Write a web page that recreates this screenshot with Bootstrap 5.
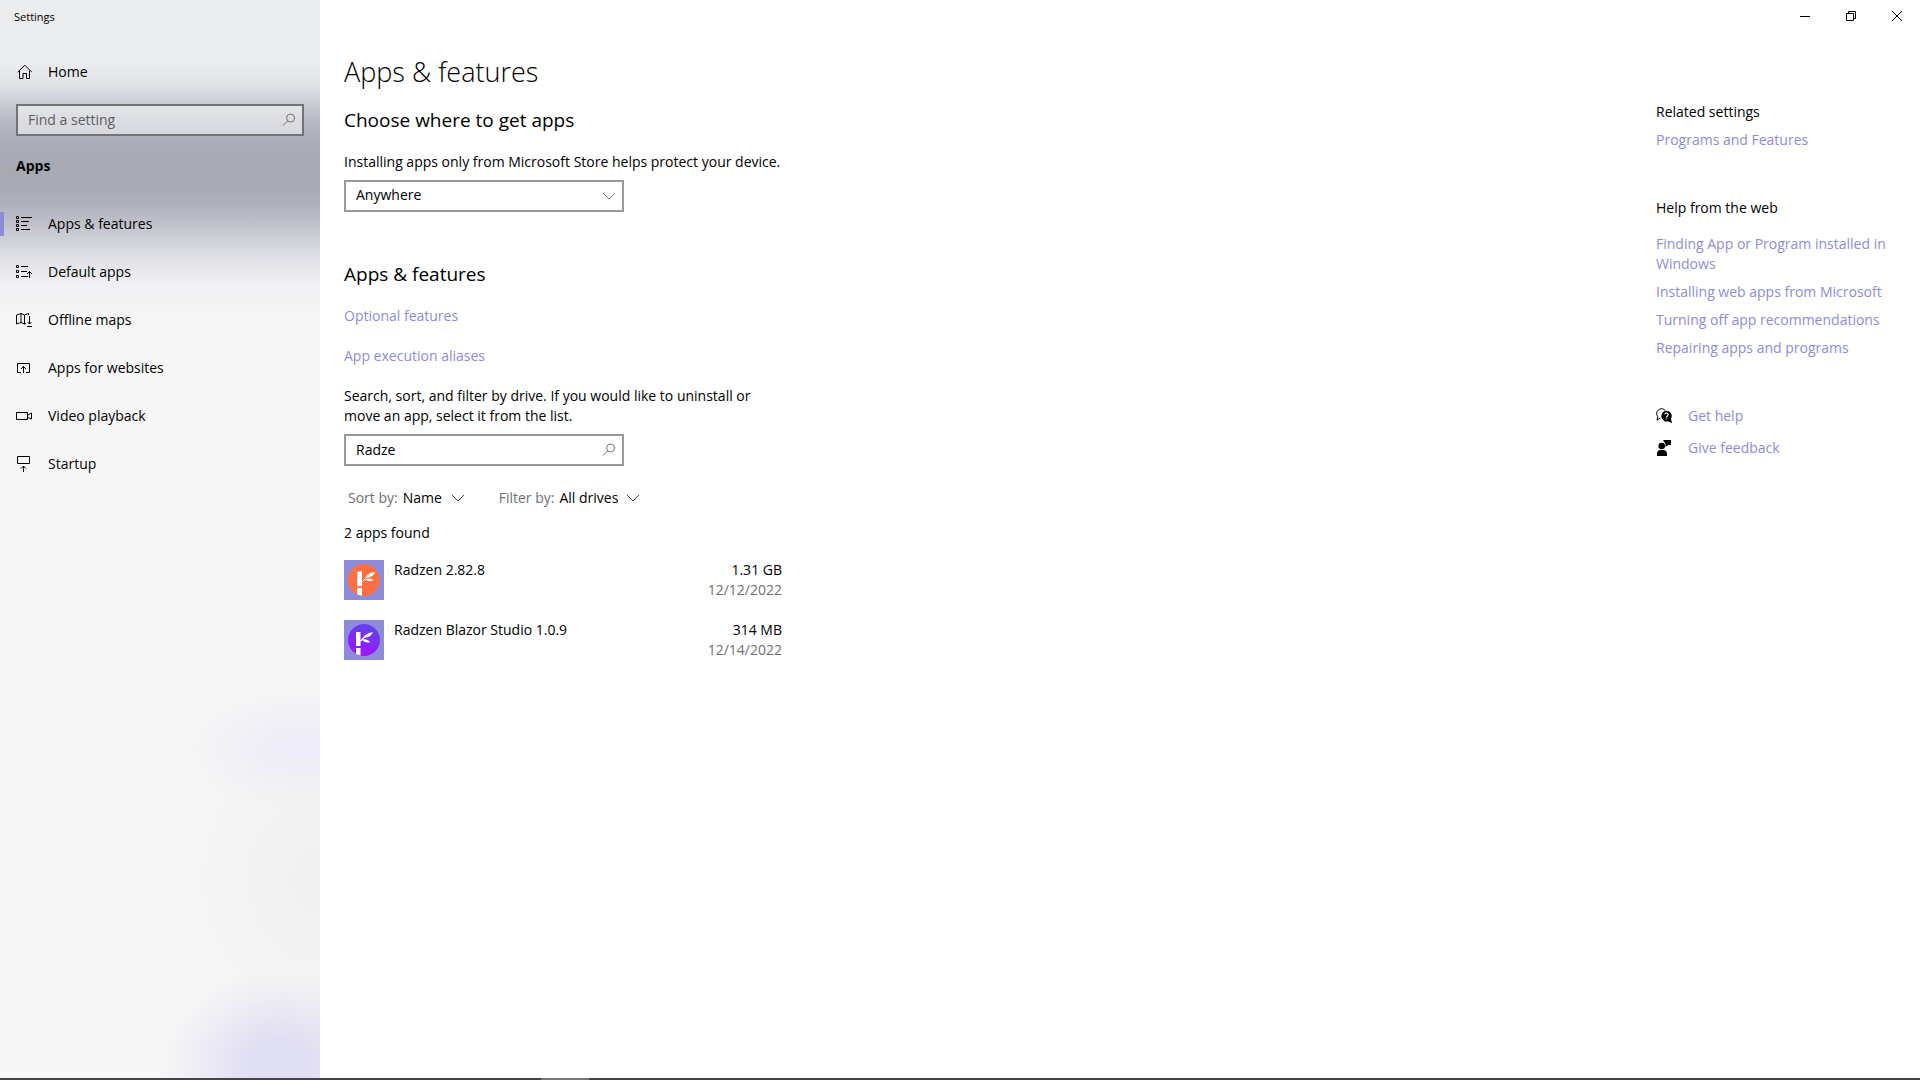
<!DOCTYPE html>
<html lang="en">
<head>
<meta charset="utf-8">
<meta name="viewport" content="width=device-width, initial-scale=1">
<title>Settings</title>
<link href="https://cdn.jsdelivr.net/npm/bootstrap@5.3.0/dist/css/bootstrap.min.css" rel="stylesheet">
<style>
  :root { --accent: #8f8bdb; --line: #999; --muted: #707070; }
  body { font-family: "Open Sans", "Noto Sans", sans-serif; font-size: 14px; line-height: 20px; color: #000; background: #fff; }
  a { color: var(--accent); text-decoration: none; }
  a:hover { color: #6b6b6b; }
  svg { display: block; flex: none; }
  .line-icon { fill: none; stroke: currentColor; stroke-width: 1; }

  .side-pane {
    width: 320px;
    background:
      radial-gradient(ellipse 120px 96px at 280px 1066px, rgba(214,212,241,.7) 25%, rgba(225,224,245,0) 100%),
      radial-gradient(ellipse 120px 60px at 300px 748px, rgba(234,233,248,.7) 20%, rgba(240,240,250,0) 100%),
      radial-gradient(ellipse 150px 170px at 320px 880px, rgba(241,240,239,.8) 20%, rgba(244,244,244,0) 100%),
      linear-gradient(#ebeced 0, #ecedee 60px, #e3e4e8 82px, #d2d4db 98px, #babcc6 118px, #abadb7 140px, #a7aab3 165px, #a8abb4 188px, #b0b2bb 206px, #c2c3cc 226px, #d4d4dd 244px, #e3e3e9 262px, #f0f0f3 284px, #f6f6f6 315px, #f7f7f7 100%);
  }
  .app-title { font-size: 11px; height: 32px; padding: 1px 14px 0; }
  .side-link { height: 48px; padding-left: 16px; gap: 16px; color: #000; }
  .side-link:hover { background: rgba(0,0,0,.08); color: #000; }
  .side-link.home { height: 32px; }
  .side-link.active::before { content: ""; width: 4px; height: 24px; margin: 0 -4px 0 -16px; background: var(--accent); }
  .side-pane h2 { font-size: 14px; line-height: 20px; font-weight: 700; }

  .box { height: 32px; border: 2px solid var(--line); border-radius: 0; padding: 0 32px 2px 10px; font-size: 14px; line-height: 20px; color: #000; background: #fff; }
  .box:focus { border-color: var(--accent); box-shadow: none; }
  .pane-box, .pane-box:focus { border-color: #727379; background: rgba(255,255,255,.5); }
  .pane-box::placeholder { color: #5d5e62; }
  .box-icon { position: absolute; right: 8px; top: 9px; color: #757575; pointer-events: none; }
  .field { width: 280px; }

  .win-btn { width: 46px; height: 32px; border: 0; background: transparent; padding: 0; display: grid; place-items: center; }
  .win-btn:hover { background: #e5e5e5; }
  .page-body { padding: 16px 24px 32px; }
  h1 { font-size: 27px; line-height: 48px; font-weight: 300; }
  main h2 { font-size: 19px; line-height: 32px; font-weight: 400; }
  .next-section { margin-top: 46px; }
  .content-col { width: 100%; max-width: 450px; }
  .wrap-text { max-width: 424px; }
  .sort-bar { gap: 34px; }
  .plain-select { appearance: none; border: 0; background: transparent; padding: 0 22px 0 5px; color: #000; height: 32px; }
  .plain-icon { position: absolute; right: 0; top: 9px; pointer-events: none; color: #444; }
  .muted { color: var(--muted); }
  .found { line-height: 22px; }
  .app-row { max-width: 438px; height: 60px; gap: 10px; }
  .side-links { width: 264px; padding-top: 70px; }
  .side-links h3 { font-size: 14px; line-height: 20px; font-weight: 400; }
  .task-edge { height: 2px; background: #444448; padding-left: 541px; }
  .task-edge span { display: block; width: 48px; height: 2px; background: #77777a; }
</style>
<script src="https://cdn.jsdelivr.net/npm/bootstrap@5.3.0/dist/js/bootstrap.bundle.min.js"></script>
</head>
<body>
<div class="d-flex flex-column min-vh-100">
  <div class="d-flex flex-grow-1">

    <aside class="side-pane flex-shrink-0">
      <div class="app-title d-flex align-items-center">Settings</div>
      <a href="#" class="side-link home d-flex align-items-center mt-4">
        <svg class="line-icon" width="16" height="16" viewBox="0 0 16 16"><path d="M1.700 8.200 8.800 1.200l7 7M3.500 6.600v7.900h3.500V9.500h3.500v5h3V6.600"/></svg>
        Home
      </a>
      <div class="position-relative mx-3 mt-3">
        <input type="search" class="form-control box pane-box" placeholder="Find a setting" aria-label="Find a setting">
        <svg class="line-icon box-icon" width="14" height="14" viewBox="0 0 14 14"><circle cx="8.6" cy="5" r="4"/><path d="M5.700 7.900 1 12.600"/></svg>
      </div>
      <h2 class="px-3 pt-3 mt-1 mb-0">Apps</h2>
      <nav class="nav flex-column flex-nowrap pt-4">
        <a href="#" class="side-link active d-flex align-items-center">
          <svg class="line-icon" width="16" height="16" viewBox="0 0 16 16"><path d="M.5.5h2v2h-2zM.5 4.500h2v2h-2zM.5 8.500h2v2h-2zM.5 12.500h2v2h-2zM5 1.500h11M5 5.500h8M5 9.500h6M5 13.500h9"/></svg>
          Apps &amp; features
        </a>
        <a href="#" class="side-link d-flex align-items-center">
          <svg class="line-icon" width="16" height="16" viewBox="0 0 16 16"><path d="M.5 1.500h2v2h-2zM.5 6.500h2v2h-2zM.5 11.500h2v2h-2zM5 2.500h7M5 7.500h6M5 12.500h7M13.500 14V7.500M11 10l2.500-2.500L16 10"/></svg>
          Default apps
        </a>
        <a href="#" class="side-link d-flex align-items-center">
          <svg class="line-icon" width="16" height="16" viewBox="0 0 16 16"><path d="M10 11.500 8.500 12 5 10.500.5 12V3L5 1.500 8.500 3l4-1.500V3M5 1.500v9M8.500 3v9M13.500 4v8M11.500 10l2 2 2-2M11 14.500h5"/></svg>
          Offline maps
        </a>
        <a href="#" class="side-link d-flex align-items-center">
          <svg class="line-icon" width="16" height="16" viewBox="0 0 16 16"><path d="M5 12.500H1.500v-9h12v9H10M7.500 13V6.500M5 9l2.500-2.500L10 9"/></svg>
          Apps for websites
        </a>
        <a href="#" class="side-link d-flex align-items-center">
          <svg class="line-icon" width="16" height="16" viewBox="0 0 16 16"><path d="M.5 4.500h11v7H.5zM12 7l3.500-2v6L12 9.500"/></svg>
          Video playback
        </a>
        <a href="#" class="side-link d-flex align-items-center">
          <svg class="line-icon" width="16" height="16" viewBox="0 0 16 16"><path d="M1.500.5h12v7h-12zM7.500 16v-6M5 12.500l2.500-2.500 2.500 2.500"/></svg>
          Startup
        </a>
      </nav>
    </aside>

    <div class="flex-grow-1 d-flex flex-column">
      <header class="d-flex justify-content-end">
        <button class="win-btn" type="button" aria-label="Minimize"><svg class="line-icon" width="10" height="10" viewBox="0 0 10 10"><path d="M0 5.500h10"/></svg></button>
        <button class="win-btn" type="button" aria-label="Restore"><svg class="line-icon" width="10" height="10" viewBox="0 0 10 10"><path d="M.5 2.500h7v7h-7zM2.500 2.500v-2h7v7h-2"/></svg></button>
        <button class="win-btn" type="button" aria-label="Close"><svg class="line-icon" width="10" height="10" viewBox="0 0 10 10"><path d="m0 0 10 10M10 0 0 10"/></svg></button>
      </header>

      <div class="d-flex flex-grow-1 justify-content-between">
        <main class="page-body flex-grow-1">
          <div class="content-col">
            <h1 class="mb-2">Apps &amp; features</h1>
            <h2 class="mb-3">Choose where to get apps</h2>
            <label for="source" class="d-block mb-2 text-nowrap">Installing apps only from Microsoft Store helps protect your device.</label>
            <div class="position-relative field">
              <select id="source" class="form-select box"><option>Anywhere</option></select>
              <svg class="line-icon box-icon" width="14" height="14" viewBox="0 0 14 14"><path d="m1 4 6 6 6-6"/></svg>
            </div>

            <h2 class="next-section mb-0">Apps &amp; features</h2>
            <div class="d-flex flex-column align-items-start gap-3 pt-3">
              <a href="#" class="pb-1">Optional features</a>
              <a href="#" class="pb-1">App execution aliases</a>
            </div>
            <label for="find-app" class="wrap-text d-block mt-3 mb-2">Search, sort, and filter by drive. If you would like to uninstall or move an app, select it from the list.</label>
            <div class="position-relative field">
              <input id="find-app" type="text" class="form-control box" value="Radze">
              <svg class="line-icon box-icon" width="14" height="14" viewBox="0 0 14 14"><circle cx="8.6" cy="5" r="4"/><path d="M5.700 7.900 1 12.600"/></svg>
            </div>

            <div class="sort-bar d-flex mt-3 ps-1">
              <div class="d-flex align-items-center position-relative">
                <label for="sort" class="muted">Sort by:</label>
                <select id="sort" class="plain-select"><option>Name</option></select>
                <svg class="line-icon plain-icon" width="14" height="14" viewBox="0 0 14 14"><path d="m1 4 6 6 6-6"/></svg>
              </div>
              <div class="d-flex align-items-center position-relative">
                <label for="filter" class="muted">Filter by:</label>
                <select id="filter" class="plain-select"><option>All drives</option></select>
                <svg class="line-icon plain-icon" width="14" height="14" viewBox="0 0 14 14"><path d="m1 4 6 6 6-6"/></svg>
              </div>
            </div>

            <p class="found mt-2 mb-3">2 apps found</p>
            <ul class="list-unstyled mb-0">
              <li class="app-row d-flex align-items-start">
                <svg width="40" height="40" viewBox="0 0 40 40"><path fill="#8f8bdb" d="M0 0h40v40H0z"/><circle cx="20" cy="20" r="16" fill="#ff6f42"/><path fill="#fff" d="M13.200 12l4.800-1v15.300h-4.800zM13.200 28H18v7.800l-4.800-1.300zM21.500 17.500c1.500-3.200 5-5 10-5.500-1.500 3.500-5 5.500-9 5.800zM22 19.300c2.500-1.300 5.500-.7 7.500 1-2.500 1-5.500 1-7.500-.2z"/><path d="m18 22.300 4.500-5M20 20l3-.7" stroke="#fff" fill="none" stroke-width=".8"/></svg>
                <span class="flex-grow-1">Radzen 2.82.8</span>
                <span class="text-end">1.31 GB<br><span class="muted">12/12/2022</span></span>
              </li>
              <li class="app-row d-flex align-items-start">
                <svg width="40" height="40" viewBox="0 0 40 40"><defs><linearGradient id="violet" x1="0.300" y1="0" x2="0" y2="1"><stop stop-color="#6340f0"/><stop offset="1" stop-color="#b008fa"/></linearGradient></defs><path fill="#8f8bdb" d="M0 0h40v40H0z"/><circle cx="20" cy="20" r="16" fill="url(#violet)"/><path fill="#fff" d="M12 12h4.500v14H12zM12 28h4.500v7.500L12 34zM16.500 20.500 19 17.500c2-3 5.500-4.800 10-5.500-1.500 3.700-4.500 5.500-8.500 6l-1.300 1.200c3-.3 5.300 1 7 3-3.200.8-6 .2-7.700-1.900l-2 1.500z"/></svg>
                <span class="flex-grow-1">Radzen Blazor Studio 1.0.9</span>
                <span class="text-end">314 MB<br><span class="muted">12/14/2022</span></span>
              </li>
            </ul>
          </div>
        </main>

        <aside class="side-links flex-shrink-0 pe-4">
          <section class="mb-5">
            <h3 class="mb-2">Related settings</h3>
            <a href="#">Programs and Features</a>
          </section>
          <section class="d-flex flex-column gap-2 mb-5">
            <h3 class="mb-2">Help from the web</h3>
            <a href="#">Finding App or Program installed in Windows</a>
            <a href="#" class="text-nowrap">Installing web apps from Microsoft</a>
            <a href="#">Turning off app recommendations</a>
            <a href="#">Repairing apps and programs</a>
          </section>
          <section class="d-flex flex-column gap-2">
            <a href="#" class="d-flex gap-3 align-items-center pb-1">
              <svg width="16" height="16" viewBox="0 0 16 16"><path d="M4.500 9.800 1 12.200l.8-3.500A4.500 4.500 0 1 1 9.300 2.500" fill="none" stroke="#000"/><path fill="#000" d="M10.500 2.700a5.300 5.300 0 0 1 4.500 8l1 4.500-3.800-1.900A5.400 5.400 0 1 1 10.500 2.700z"/><path d="M8.800 6.500c.2-2 3.600-1.700 3.400.3-.1 1.300-1.700 1.200-1.700 2.600m0 1v1.200" fill="none" stroke="#fff" stroke-width="1.200"/></svg>
              Get help
            </a>
            <a href="#" class="d-flex gap-3 align-items-center">
              <svg width="16" height="16" viewBox="0 0 16 16"><path fill="#000" d="M7 0h8v5h-3L9.500 7V4z"/><circle cx="5.700" cy="6" r="3.300" fill="#000"/><path fill="#000" d="M1 16v-2.500C1 11.500 2.500 10 4 10h3.500c1.800 0 3.500 1.500 3.500 3.500V16z"/></svg>
              Give feedback
            </a>
          </section>
        </aside>
      </div>
    </div>
  </div>
  <div class="task-edge"><span></span></div>
</div>
</body>
</html>
